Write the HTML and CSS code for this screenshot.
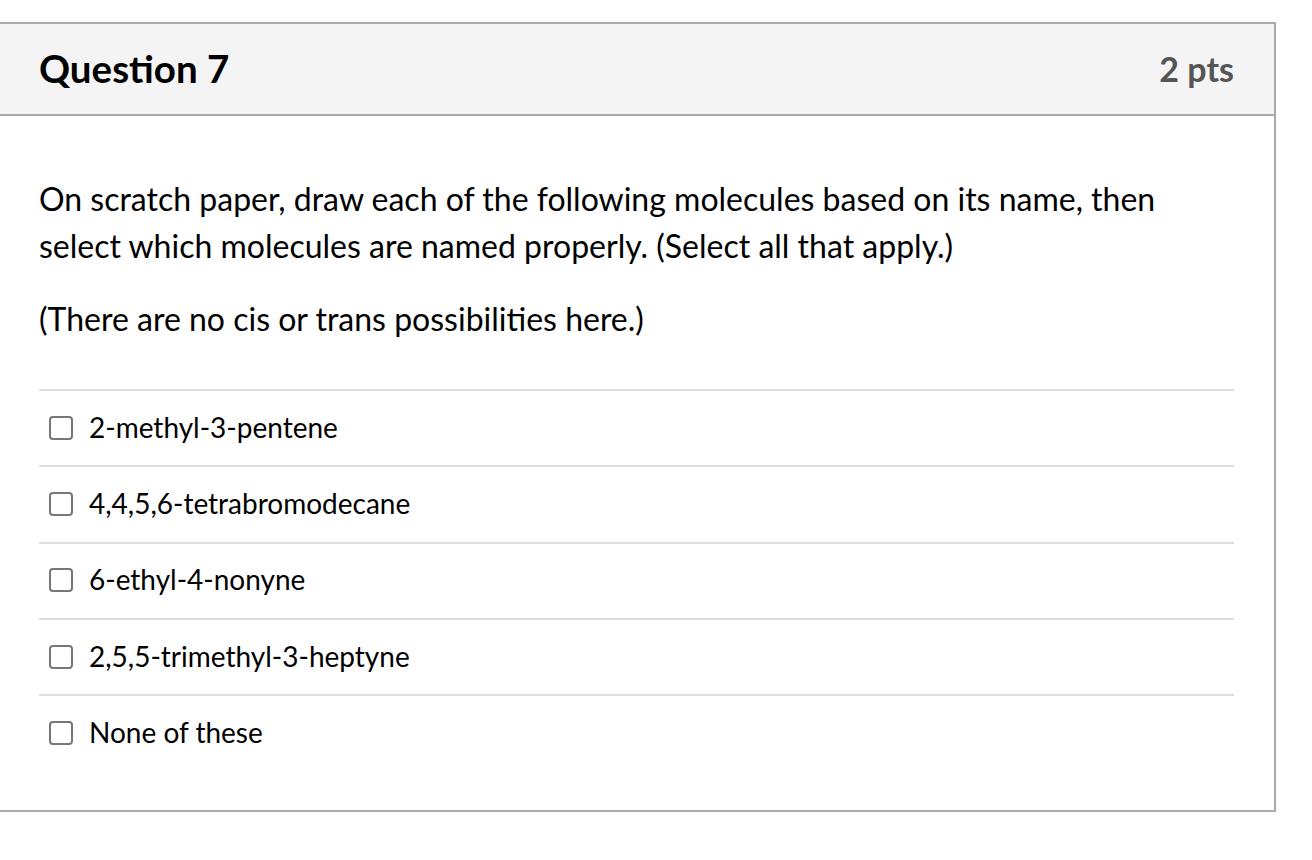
FILE: index.html
```html
<!DOCTYPE html>
<html>
<head>
<meta charset="utf-8">
<link rel="stylesheet" href="styles.css">
</head>
<body>
<div class="card">
  <div class="card-header">
    <h2 class="title">Question 7</h2>
    <span class="pts">2 pts</span>
  </div>
  <div class="card-body">
    <p class="text">On scratch paper, draw each of the following molecules based on its name, then select which molecules are named properly. (Select all that apply.)</p>
    <p class="text">(There are no cis or trans possibilities here.)</p>
    <div class="answers">
      <label class="answer"><span class="box"></span><span class="label">2-methyl-3-pentene</span></label>
      <label class="answer"><span class="box"></span><span class="label">4,4,5,6-tetrabromodecane</span></label>
      <label class="answer"><span class="box"></span><span class="label">6-ethyl-4-nonyne</span></label>
      <label class="answer"><span class="box"></span><span class="label">2,5,5-trimethyl-3-heptyne</span></label>
      <label class="answer"><span class="box"></span><span class="label">None of these</span></label>
    </div>
  </div>
</div>
</body>
</html>
```

FILE: styles.css
```css
html, body {
  margin: 0;
  padding: 0;
  background: #fff;
}
body {
  font-family: Lato, "Open Sans", sans-serif;
  color: #000;
}
.card {
  box-sizing: border-box;
  margin: 22px 0 0 -2px;
  width: 1278px;
  border: 2px solid #aaaaaa;
  background: #fff;
}
.card-header {
  box-sizing: border-box;
  height: 92px;
  background: #f4f4f4;
  border-bottom: 2px solid #aaaaaa;
  display: flex;
  align-items: center;
  justify-content: space-between;
  padding: 0 40px 2px 39px;
}
.title {
  margin: 0;
  font-size: 38.5px;
  font-weight: 700;
  color: #000;
}
.pts {
  font-size: 34px;
  font-weight: 700;
  color: #555;
}
.card-body {
  padding: 59px 40px 40px 39px;
}
.text {
  margin: 0 0 26px;
  font-size: 32px;
  line-height: 47px;
}
.answers {
  margin-top: 47px;
}
.answer {
  display: flex;
  align-items: center;
  height: 76.3px;
  border-top: 2px solid #dddddd;
  box-sizing: border-box;
  padding: 0 0 3px 10px;
}
.box {
  box-sizing: border-box;
  width: 24px;
  height: 24px;
  border: 2px solid #777;
  border-radius: 4px;
  flex: none;
  margin: 2px 16px 0 0;
}
.label {
  font-size: 28px;
}
```
